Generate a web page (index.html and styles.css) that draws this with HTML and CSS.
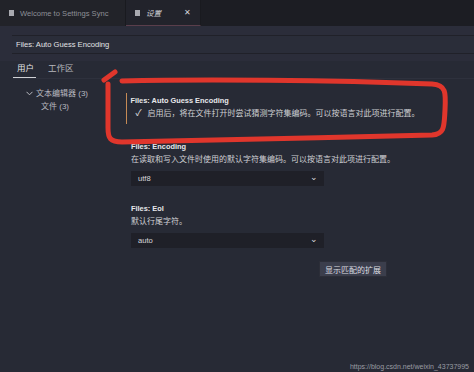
FILE: index.html
```html
<!DOCTYPE html>
<html lang="zh-CN">
<head>
  <meta charset="UTF-8">
  <title>设置</title>
  <link rel="stylesheet" href="styles.css">
</head>
<body>
  <div class="window">
    <div class="tabbar">
      <div class="tab">
        <span class="tab-icon"></span>
        <span class="tab-label">Welcome to Settings Sync</span>
      </div>
      <div class="tab active">
        <span class="tab-icon"></span>
        <span class="tab-label cjk-italic">设置</span>
        <span class="tab-close">✕</span>
      </div>
    </div>

    <div class="search-row">
      <div class="search-box">Files: Auto Guess Encoding</div>
    </div>

    <div class="scope-tabs">
      <span class="scope selected">用户</span>
      <span class="scope">工作区</span>
    </div>

    <div class="settings">
      <div class="toc">
        <div class="toc-item">
          <svg class="chevron" width="7" height="5" viewBox="0 0 7 5"><path d="M0.5 0.8 L3.5 3.8 L6.5 0.8" /></svg>文本编辑器 (3)
        </div>
        <div class="toc-item sub">文件 (3)</div>
      </div>

      <div class="list">
        <div class="setting focused">
          <div class="setting-title">Files: Auto Guess Encoding</div>
          <div class="setting-desc"><span class="check">✓</span>启用后，将在文件打开时尝试猜测字符集编码。可以按语言对此项进行配置。</div>
        </div>

        <div class="setting">
          <div class="setting-title">Files: Encoding</div>
          <div class="setting-desc">在读取和写入文件时使用的默认字符集编码。可以按语言对此项进行配置。</div>
          <div class="select">utf8<span class="caret">⌄</span></div>
        </div>

        <div class="setting">
          <div class="setting-title">Files: Eol</div>
          <div class="setting-desc">默认行尾字符。</div>
          <div class="select">auto<span class="caret">⌄</span></div>
        </div>

        <div class="actions">
          <button class="ext-button">显示匹配的扩展</button>
        </div>
      </div>
    </div>

    <!-- hand drawn marker around the first setting -->
    <svg class="marker" width="474" height="372" viewBox="0 0 474 372">
      <path d="M104 80 L115 72" />
      <path d="M122 81 C200 79 330 80 432 84 C446 85 446 92 445 110 C444 126 445 134 432 135 C330 138 200 140 122 142 C110 142 108 138 108 128 L108 84" />
    </svg>

    <div class="watermark">https://blog.csdn.net/weixin_43737995</div>
  </div>
</body>
</html>
```

FILE: styles.css
```css
body {
  margin: 0;
  background: #272a35;
  font-family: "Liberation Sans", "Noto Sans CJK SC", sans-serif;
  font-size: 8px;
  color: #cfd0d4;
}

.window {
  position: relative;
  width: 474px;
  height: 372px;
  overflow: hidden;
  background: #272a35;
}

/* tabs */
.tabbar {
  display: flex;
  height: 26px;
  background: #1c1d23;
}

.tab {
  display: flex;
  align-items: center;
  gap: 5px;
  padding: 0 9px;
  background: #222329;
  color: #8d8f97;
  font-size: 7.6px;
  white-space: nowrap;
  border-right: 1px solid #191a1f;
}

.tab:first-child {
  width: 107px;
}

.tab.active {
  width: 56px;
  color: #c6c7cc;
  background: #22232b;
  border-bottom: 1px solid #5a3e4b;
}

.tab-icon {
  width: 5px;
  height: 6px;
  background: #a9aab0;
  border-right: 1px solid #222329;
}

.cjk-italic {
  font-style: italic;
}

.tab-close {
  margin-left: auto;
  font-size: 8px;
  color: #d5d6da;
}

/* search */
.search-row {
  background: #2b2d3a;
  padding: 9px 0 7px 12px;
}

.search-box {
  height: 17px;
  line-height: 17px;
  padding-left: 4px;
  background: #2a2d39;
  border-top: 1px solid #202129;
  border-bottom: 1px solid #202129;
  color: #e2e3e6;
  font-size: 7.6px;
}

/* user / workspace */
.scope-tabs {
  display: flex;
  gap: 8px;
  margin: 0 0 0 13px;
  padding-top: 0;
  border-bottom: 1px solid #2e313d;
}

.scope {
  padding: 0 2px 4px 4px;
  color: #b7b8bd;
  font-size: 8.5px;
}

.scope.selected {
  color: #e2e3e6;
  border-bottom: 1px solid #d0d1d5;
}

/* main */
.settings {
  display: flex;
}

.toc {
  width: 126px;
  padding-top: 8px;
  color: #b9bac0;
}

.toc-item {
  height: 13px;
  line-height: 13px;
  padding-left: 26px;
}

.toc-item.sub {
  padding-left: 41px;
}

.chevron {
  margin-right: 3px;
  fill: none;
  stroke: #b9bac0;
  stroke-width: 1;
}

.list {
  width: 300px;
  padding-top: 14px;
}

.setting {
  padding-left: 5px;
  margin-bottom: 16px;
}

.setting.focused {
  border-left: 1.5px solid #c58a55;
  padding: 1px 0 4px 3.5px;
}

.setting-title {
  height: 13px;
  line-height: 13px;
  font-weight: bold;
  font-size: 7.4px;
  color: #e7e8eb;
}

.setting-desc {
  height: 13px;
  line-height: 13px;
  color: #cfd0d4;
  white-space: nowrap;
}

.check {
  display: inline-block;
  width: 12px;
  margin-left: 5px;
  font-size: 9px;
  color: #e0e1e4;
}

.select {
  display: flex;
  align-items: center;
  width: 186px;
  height: 15px;
  margin-top: 5px;
  padding-left: 7px;
  background: #1f2028;
  color: #d8d9dc;
  font-size: 7.6px;
}

.caret {
  margin-left: auto;
  margin-right: 6px;
  margin-top: -4px;
  font-size: 9px;
}

.actions {
  padding-left: 193px;
  margin-top: -3px;
}

.ext-button {
  font-family: inherit;
  font-size: 8px;
  color: #dcdde1;
  background: #3b3e4c;
  border: 1px solid #2c2e38;
  padding: 2px 3px;
  width: 68px;
  height: 16px;
}

/* overlays */
.marker {
  position: absolute;
  left: 0;
  top: 0;
  fill: none;
  stroke: #e0362c;
  stroke-width: 5;
  stroke-linecap: round;
  stroke-linejoin: round;
}

.watermark {
  position: absolute;
  right: 5px;
  bottom: 2px;
  font-size: 7px;
  color: #9a9ca3;
}
```
